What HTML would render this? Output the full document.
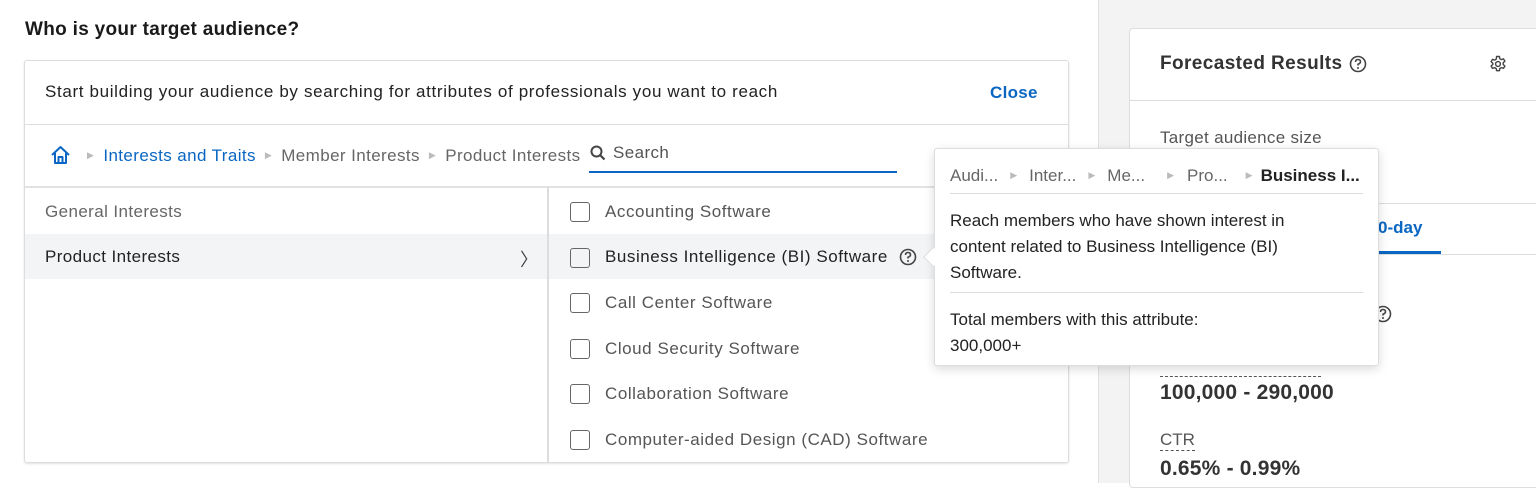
<!DOCTYPE html>
<html><head><meta charset="utf-8"><style>
*{margin:0;padding:0;box-sizing:border-box}
body{width:1536px;height:483px;overflow:hidden;background:#fff;font-family:"Liberation Sans",sans-serif;position:relative;color:#333}
.a{position:absolute;white-space:nowrap}
.cb{position:absolute;left:570px;width:20px;height:20px;border:1.5px solid #666;border-radius:3px}
.it{position:absolute;left:605px;font-size:17px;color:#555;letter-spacing:.55px}
.sep{color:#bbb;font-size:9px;margin:0 9px;vertical-align:3px}
</style></head><body>
<div class="a" style="left:25px;top:19px;font-size:19px;font-weight:bold;color:#1a1a1a;letter-spacing:.3px">Who is your target audience?</div>
<div class="a" style="left:24px;top:60px;width:1045px;height:403px;border:1px solid #ddd;border-radius:3px;box-shadow:0 1px 2px rgba(0,0,0,.12)"></div>
<div class="a" style="left:45px;top:82px;font-size:17px;color:#222;letter-spacing:.65px">Start building your audience by searching for attributes of professionals you want to reach</div>
<div class="a" style="left:990px;top:83px;font-size:17px;color:#0a66c2;font-weight:bold;letter-spacing:.3px">Close</div>
<div class="a" style="left:25px;top:124px;width:1043px;height:1px;background:#ddd"></div>
<svg class="a" style="left:50px;top:145px" width="21" height="20" viewBox="0 0 21 20"><path d="M2 10 L10.5 2 L19 10 M5 8 V18 H16 V8 M8.5 18 V12 H12.5 V18" fill="none" stroke="#0a66c2" stroke-width="2" stroke-linejoin="round"/></svg>
<div class="a" style="left:78px;top:146px;font-size:17px;color:#666;letter-spacing:.4px"><span class="sep">▶</span><span style="color:#0a66c2">Interests and Traits</span><span class="sep">▶</span>Member Interests<span class="sep">▶</span>Product Interests</div>
<svg class="a" style="left:590px;top:145px" width="16" height="16" viewBox="0 0 16 16"><circle cx="6.5" cy="6.5" r="5" fill="none" stroke="#444" stroke-width="2"/><path d="M10 10 L14.5 14.5" stroke="#444" stroke-width="2.2"/></svg>
<div class="a" style="left:613px;top:143px;font-size:17px;color:#555;letter-spacing:.4px">Search</div>
<div class="a" style="left:589px;top:171px;width:308px;height:1.5px;background:#0a66c2"></div>
<div class="a" style="left:25px;top:186px;width:1043px;height:2px;background:#e2e2e2"></div>
<div class="a" style="left:547px;top:187px;width:1.5px;height:275px;background:#ddd"></div>
<div class="a" style="left:45px;top:202px;font-size:17px;color:#666;letter-spacing:.4px">General Interests</div>
<div class="a" style="left:25px;top:234px;width:522px;height:45px;background:#f3f4f6"></div>
<div class="a" style="left:45px;top:247px;font-size:17px;color:#222;letter-spacing:.4px">Product Interests</div>
<div class="a" style="left:520px;top:246px;font-size:18px;color:#444">〉</div>
<div class="a" style="left:549px;top:234px;width:519px;height:45px;background:#f3f4f6"></div>
<div class="cb" style="top:202px"></div><div class="it" style="top:202px">Accounting Software</div>
<div class="cb" style="top:248px"></div><div class="it" style="top:247px;color:#222">Business Intelligence (BI) Software</div>
<svg class="a" style="left:899px;top:248px" width="18" height="18" viewBox="0 0 18 18"><circle cx="9" cy="9" r="7.5" fill="none" stroke="#444" stroke-width="1.6"/><path d="M6.5 7 Q6.5 4.5 9 4.5 Q11.5 4.5 11.5 6.8 Q11.5 8.3 9 9.3 V10.5" fill="none" stroke="#444" stroke-width="1.6"/><circle cx="9" cy="13" r="1" fill="#444"/></svg>
<div class="cb" style="top:293px"></div><div class="it" style="top:293px">Call Center Software</div>
<div class="cb" style="top:339px"></div><div class="it" style="top:339px">Cloud Security Software</div>
<div class="cb" style="top:384px"></div><div class="it" style="top:384px">Collaboration Software</div>
<div class="cb" style="top:430px"></div><div class="it" style="top:430px">Computer-aided Design (CAD) Software</div>
<!-- right -->
<div class="a" style="left:1098px;top:0;width:438px;height:483px;background:#f3f3f3;border-left:1.5px solid #e0e0e0"></div>
<div class="a" style="left:1129px;top:28px;width:420px;height:460px;background:#fff;border:1px solid #ddd;border-radius:4px"></div>
<div class="a" style="left:1160px;top:53px;font-size:19px;font-weight:bold;color:#333;letter-spacing:.4px">Forecasted Results</div>
<svg class="a" style="left:1349px;top:55px" width="18" height="18" viewBox="0 0 18 18"><circle cx="9" cy="9" r="7.5" fill="none" stroke="#444" stroke-width="1.6"/><path d="M6.5 7 Q6.5 4.5 9 4.5 Q11.5 4.5 11.5 6.8 Q11.5 8.3 9 9.3 V10.5" fill="none" stroke="#444" stroke-width="1.6"/><circle cx="9" cy="13" r="1" fill="#444"/></svg>
<svg class="a" style="left:1489px;top:55px" width="18" height="18" viewBox="0 0 18 18"><g fill="none" stroke="#444" stroke-width="1.4" stroke-linejoin="round"><path d="M7.6 1.5h2.8l.4 2.2 1.6.9 2.1-.8 1.4 2.4-1.7 1.5v1.8l1.7 1.5-1.4 2.4-2.1-.8-1.6.9-.4 2.2H7.6l-.4-2.2-1.6-.9-2.1.8-1.4-2.4 1.7-1.5V8.2L2.1 6.7l1.4-2.4 2.1.8 1.6-.9z"/><circle cx="9" cy="9" r="2.4"/></g></svg>
<div class="a" style="left:1130px;top:100px;width:406px;height:1px;background:#ddd"></div>
<div class="a" style="left:1160px;top:128px;font-size:17px;color:#555;letter-spacing:.3px">Target audience size</div>
<div class="a" style="left:1130px;top:203px;width:406px;height:1px;background:#ddd"></div>
<div class="a" style="left:1378px;top:218px;font-size:17px;color:#0a66c2;font-weight:bold">0-day</div>
<div class="a" style="left:1378px;top:251px;width:63px;height:3px;background:#0a66c2"></div>
<div class="a" style="left:1130px;top:254px;width:406px;height:1px;background:#ddd"></div>
<svg class="a" style="left:1374px;top:305px" width="18" height="18" viewBox="0 0 18 18"><circle cx="9" cy="9" r="7.5" fill="none" stroke="#444" stroke-width="1.6"/><path d="M6.5 7 Q6.5 4.5 9 4.5 Q11.5 4.5 11.5 6.8 Q11.5 8.3 9 9.3 V10.5" fill="none" stroke="#444" stroke-width="1.6"/><circle cx="9" cy="13" r="1" fill="#444"/></svg>
<div class="a" style="left:1160px;top:357px;width:161px;border-bottom:1.5px dashed #555;height:20px;overflow:hidden"></div>
<div class="a" style="left:1160px;top:381px;font-size:21px;font-weight:bold;color:#333;letter-spacing:.2px">100,000 - 290,000</div>
<div class="a" style="left:1160px;top:430px;font-size:17px;color:#555;border-bottom:1.5px dashed #555;line-height:20px">CTR</div>
<div class="a" style="left:1160px;top:457px;font-size:21px;font-weight:bold;color:#333;letter-spacing:.2px">0.65% - 0.99%</div>
<!-- popover -->
<div class="a" style="left:934px;top:148px;width:445px;height:218px;background:#fff;border:1px solid #ddd;border-radius:3px;box-shadow:0 3px 10px rgba(0,0,0,.15)"></div>
<div class="a" style="left:926px;top:250px;width:14px;height:14px;background:#fff;transform:rotate(45deg);border-left:1px solid #ddd;border-bottom:1px solid #ddd"></div>
<div class="a" style="left:950px;top:166px;font-size:17px;color:#666">Audi...<span class="sep" style="margin:0 12px">▶</span>Inter...<span class="sep" style="margin:0 12px">▶</span>Me...<span class="sep" style="margin:0 13px 0 22px">▶</span>Pro...<span class="sep" style="margin:0 8px 0 18px">▶</span><b style="color:#222">Business I...</b></div>
<div class="a" style="left:950px;top:193px;width:413px;height:1px;background:#ddd"></div>
<div class="a" style="left:950px;top:208px;font-size:17px;color:#222;line-height:26px">Reach members who have shown interest in<br>content related to Business Intelligence (BI)<br>Software.</div>
<div class="a" style="left:950px;top:292px;width:413px;height:1px;background:#ddd"></div>
<div class="a" style="left:950px;top:307px;font-size:17px;color:#222;line-height:26px">Total members with this attribute:<br>300,000+</div>
</body></html>
